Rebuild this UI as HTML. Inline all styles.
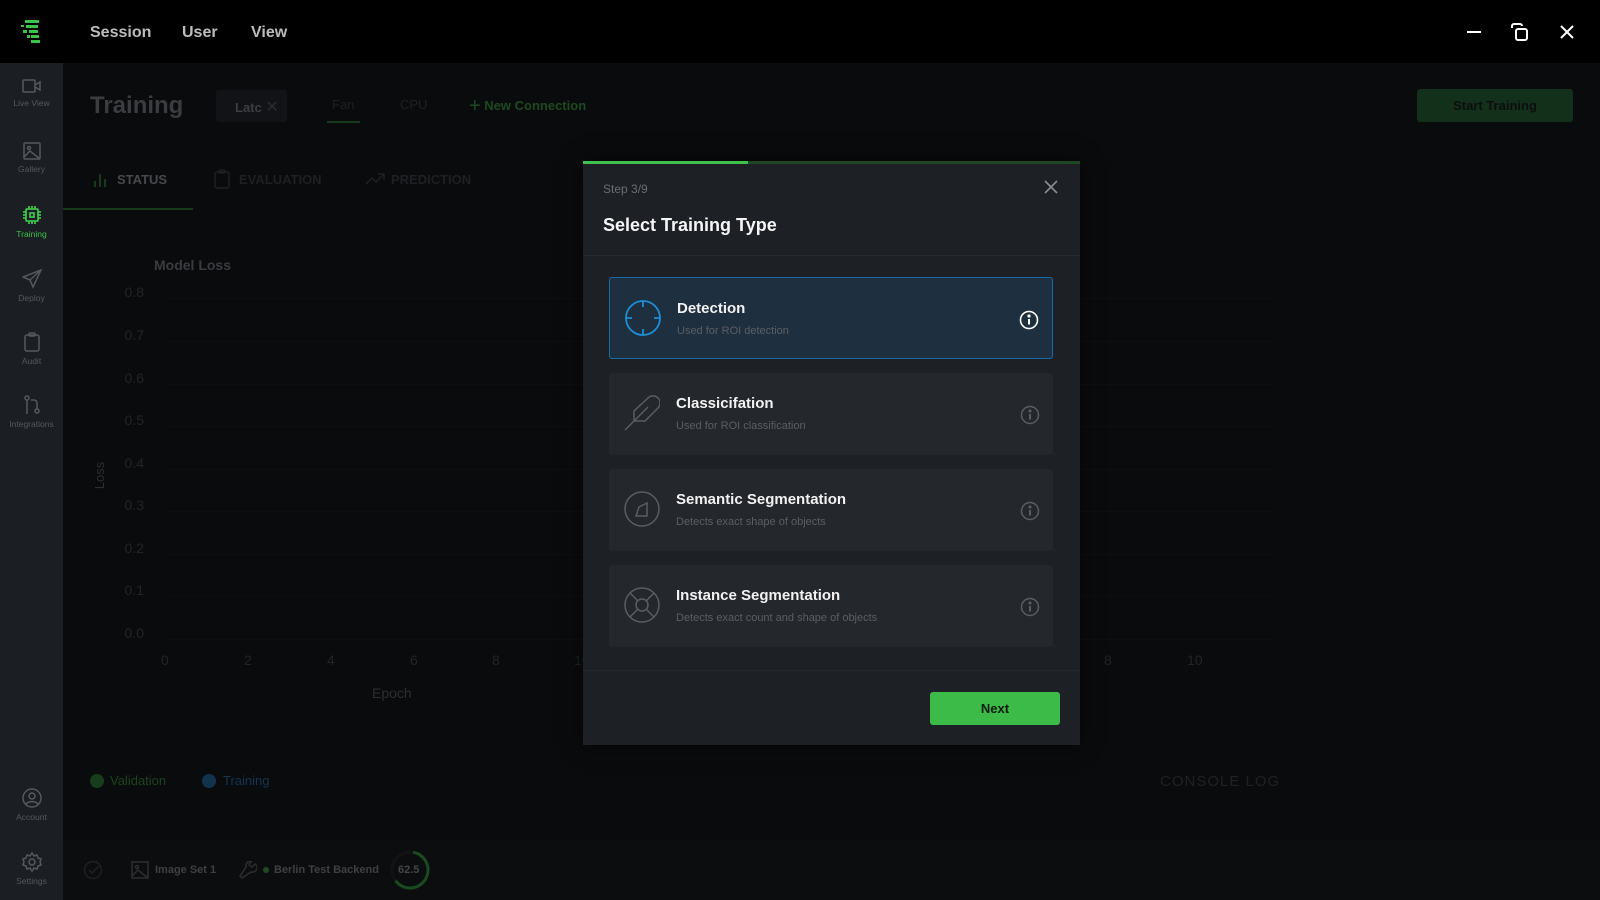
<!DOCTYPE html>
<html><head><meta charset="utf-8"><style>
*{margin:0;padding:0;box-sizing:border-box}
body{width:1600px;height:900px;overflow:hidden;background:#0a0b0d;font-family:"Liberation Sans",sans-serif;position:relative}
.abs{position:absolute}
.top{left:0;top:0;width:1600px;height:63px;background:#000}
.menu{top:24px;font-size:16px;font-weight:bold;color:#bdbdbd}
.side{left:0;top:63px;width:63px;height:837px;background:#1b1e22}
.si{position:absolute;left:0;width:63px;text-align:center;font-size:8.5px;color:#55585d}
.si svg{display:block;margin:0 auto 4px}
.dim{color:#1e2023}
.ylab{position:absolute;left:120px;width:24px;text-align:right;font-size:14px;color:#222427}
.xlab{position:absolute;top:652px;font-size:14px;color:#222427}
.grid{position:absolute;left:165px;width:1110px;height:1px;background:#0e0f12}
.modal{left:583px;top:161px;width:497px;height:584px;background:#1d2025;box-shadow:0 0 20px rgba(0,0,0,.6)}
.card{position:absolute;left:26px;width:444px;height:82px;background:#24272c;border-radius:3px}
.card.sel{background:#1e2f3f;border:1px solid #1a6aa8}
.card .t{position:absolute;left:67px;top:22px;font-size:15px;font-weight:bold;color:#f2f2f2}
.card .d{position:absolute;left:67px;top:47px;font-size:11px;color:#5b5e63}
.card .ic{position:absolute;left:15px;top:22px}
.card .inf{position:absolute;right:13px;top:32px}
</style></head><body>
<div class="abs top"></div>
<svg class="abs" style="left:18px;top:19px" width="26" height="26" viewBox="0 0 26 26">
<g fill="#3cc14a"><rect x="7" y="1" width="14" height="3"/><rect x="3" y="6" width="3" height="2"/><rect x="8" y="6" width="12" height="3"/><rect x="5" y="11" width="4" height="3"/><rect x="11" y="11" width="9" height="3"/><rect x="9" y="16" width="3" height="3"/><rect x="13" y="16" width="8" height="3"/><rect x="13" y="21" width="9" height="3"/></g></svg>
<div class="abs menu" style="left:90px">Session</div>
<div class="abs menu" style="left:182px">User</div>
<div class="abs menu" style="left:251px">View</div>
<svg class="abs" style="left:1465px;top:22px" width="130" height="20" viewBox="0 0 130 20" fill="none" stroke="#fff" stroke-width="2">
<path d="M2 10h14"/><path d="M47 6V4a2 2 0 0 1 2-2h6a2 2 0 0 1 2 2"/><rect x="51" y="7" width="11" height="11" rx="2"/><path d="M96 4l12 12M108 4l-12 12"/></svg>

<div class="abs side"></div>
<div class="si" style="top:78px"><svg width="20" height="16" viewBox="0 0 20 16" fill="none" stroke="#55585d" stroke-width="1.5"><rect x="1" y="2" width="12" height="12" rx="1"/><path d="M13 7l5-3v8l-5-3"/></svg>Live View</div>
<div class="si" style="top:142px"><svg width="18" height="18" viewBox="0 0 18 18" fill="none" stroke="#55585d" stroke-width="1.5"><rect x="1" y="1" width="16" height="16" rx="1"/><circle cx="6" cy="6" r="1.5"/><path d="M1 15l6-6 10 8"/></svg>Gallery</div>
<div class="si" style="top:205px;color:#3cc14a"><svg width="20" height="20" viewBox="0 0 20 20" fill="none" stroke="#3cc14a" stroke-width="1.8"><rect x="4" y="4" width="12" height="12" rx="1"/><rect x="8" y="8" width="4" height="4"/><path d="M7 1v3M10 1v3M13 1v3M7 16v3M10 16v3M13 16v3M1 7h3M1 10h3M1 13h3M16 7h3M16 10h3M16 13h3"/></svg>Training</div>
<div class="si" style="top:269px"><svg width="20" height="20" viewBox="0 0 20 20" fill="none" stroke="#55585d" stroke-width="1.5"><path d="M19 1L1 8l7 3 3 7z"/><path d="M19 1L8 11"/></svg>Deploy</div>
<div class="si" style="top:332px"><svg width="16" height="20" viewBox="0 0 16 20" fill="none" stroke="#55585d" stroke-width="1.5"><rect x="1" y="3" width="14" height="16" rx="2"/><rect x="5" y="1" width="6" height="3" rx="1"/></svg>Audit</div>
<div class="si" style="top:395px"><svg width="18" height="20" viewBox="0 0 18 20" fill="none" stroke="#55585d" stroke-width="1.5"><circle cx="4" cy="3" r="2"/><circle cx="14" cy="16" r="2"/><path d="M4 5v14M14 14V8a3 3 0 0 0-3-3H8"/></svg>Integrations</div>
<div class="si" style="top:788px"><svg width="20" height="20" viewBox="0 0 20 20" fill="none" stroke="#55585d" stroke-width="1.5"><circle cx="10" cy="10" r="9"/><circle cx="10" cy="8" r="3"/><path d="M4 16a7 5 0 0 1 12 0"/></svg>Account</div>
<div class="si" style="top:852px"><svg width="20" height="20" viewBox="0 0 20 20" fill="none" stroke="#55585d" stroke-width="1.5"><circle cx="10" cy="10" r="3"/><path d="M10 1l2 3 3-1 1 3 3 1-1 3 1 3-3 1-1 3-3-1-2 3-2-3-3 1-1-3-3-1 1-3-1-3 3-1 1-3 3 1z"/></svg>Settings</div>

<div class="abs" style="left:90px;top:92px;font-size:24px;font-weight:bold;color:#3a3c40">Training</div>
<div class="abs" style="left:216px;top:90px;width:71px;height:32px;background:#121316;border-radius:3px;font-size:13px;font-weight:bold;color:#3c3e42;padding:7px 0 0 19px">Latc <span style="color:#2a2c30;font-weight:normal;font-size:16px">✕</span></div>
<div class="abs dim" style="left:332px;top:97px;font-size:13px">Fan</div>
<div class="abs" style="left:327px;top:121px;width:33px;height:2px;background:#183a1c"></div>
<div class="abs dim" style="left:400px;top:97px;font-size:13px">CPU</div>
<div class="abs" style="left:469px;top:95px;font-size:13px;font-weight:bold;color:#1d4a22"><span style="font-size:20px;font-weight:normal;vertical-align:-2px">+</span> New Connection</div>
<div class="abs" style="left:1417px;top:89px;width:156px;height:33px;background:#12301a;border-radius:3px;font-size:13px;font-weight:bold;color:#0c0f0d;text-align:center;line-height:33px">Start Training</div>

<svg class="abs" style="left:93px;top:171px" width="14" height="16"><path d="M2 16V10M7 16V3M12 16V8" stroke="#1d4a22" stroke-width="1.5"/></svg>
<div class="abs" style="left:117px;top:172px;font-size:13px;font-weight:bold;color:#48494d">STATUS</div>
<div class="abs" style="left:63px;top:208px;width:130px;height:2px;background:#183a1c"></div>
<svg class="abs" style="left:214px;top:169px" width="16" height="20" fill="none" stroke="#1e2023" stroke-width="1.5"><rect x="1" y="3" width="14" height="16" rx="2"/><rect x="5" y="1" width="6" height="3" rx="1"/></svg>
<div class="abs" style="left:239px;top:172px;font-size:13px;font-weight:bold;color:#1e2023">EVALUATION</div>
<svg class="abs" style="left:365px;top:171px" width="20" height="14" fill="none" stroke="#1e2023" stroke-width="1.5"><path d="M1 13l6-6 4 4 8-8M13 3h6v6"/></svg>
<div class="abs" style="left:391px;top:172px;font-size:13px;font-weight:bold;color:#1e2023">PREDICTION</div>

<div class="abs" style="left:154px;top:257px;font-size:14px;font-weight:bold;color:#3a3c40">Model Loss</div>
<div class="grid" style="top:298px"></div><div class="grid" style="top:341px"></div><div class="grid" style="top:384px"></div><div class="grid" style="top:426px"></div><div class="grid" style="top:469px"></div><div class="grid" style="top:511px"></div><div class="grid" style="top:554px"></div><div class="grid" style="top:596px"></div><div class="grid" style="top:639px"></div>
<div class="ylab" style="top:284px">0.8</div><div class="ylab" style="top:327px">0.7</div><div class="ylab" style="top:370px">0.6</div><div class="ylab" style="top:412px">0.5</div><div class="ylab" style="top:455px">0.4</div><div class="ylab" style="top:497px">0.3</div><div class="ylab" style="top:540px">0.2</div><div class="ylab" style="top:582px">0.1</div><div class="ylab" style="top:625px">0.0</div>
<div class="xlab" style="left:161px">0</div><div class="xlab" style="left:244px">2</div><div class="xlab" style="left:327px">4</div><div class="xlab" style="left:410px">6</div><div class="xlab" style="left:492px">8</div><div class="xlab" style="left:574px">10</div><div class="xlab" style="left:1104px">8</div><div class="xlab" style="left:1187px">10</div>
<div class="abs" style="left:372px;top:685px;font-size:14px;color:#2c2e32">Epoch</div>
<div class="abs" style="left:86px;top:468px;font-size:13px;color:#2c2e32;transform:rotate(-90deg)">Loss</div>

<div class="abs" style="left:90px;top:774px;width:14px;height:14px;border-radius:50%;background:#173d1b"></div>
<div class="abs" style="left:110px;top:773px;font-size:13px;color:#1b4420">Validation</div>
<div class="abs" style="left:202px;top:774px;width:14px;height:14px;border-radius:50%;background:#13334d"></div>
<div class="abs" style="left:223px;top:773px;font-size:13px;color:#163550">Training</div>
<div class="abs" style="left:1160px;top:773px;font-size:15px;letter-spacing:1px;color:#1f2124">CONSOLE LOG</div>

<div class="abs" style="left:63px;top:840px;width:1537px;height:60px;background:#0c0d0f"></div>
<svg class="abs" style="left:83px;top:860px" width="20" height="20" fill="none" stroke="#1e2023" stroke-width="1.5"><circle cx="10" cy="10" r="8.5"/><path d="M6 10l3 3 7-7"/></svg>
<svg class="abs" style="left:131px;top:861px" width="18" height="18" fill="none" stroke="#2c2e32" stroke-width="1.5"><rect x="1" y="1" width="16" height="16"/><circle cx="6" cy="6" r="1.5"/><path d="M1 15l6-6 10 8"/></svg>
<div class="abs" style="left:155px;top:864px;font-size:11px;font-weight:bold;color:#3e4044">Image Set 1</div>
<svg class="abs" style="left:239px;top:861px" width="18" height="18" fill="none" stroke="#2c2e32" stroke-width="1.5"><path d="M16 3l-3 3-2-1-1-2 3-3a5 5 0 0 0-6 6L1 15l2 2 9-6a5 5 0 0 0 6-6z"/></svg>
<div class="abs" style="left:263px;top:867px;width:6px;height:6px;border-radius:50%;background:#1d4a22"></div>
<div class="abs" style="left:274px;top:864px;font-size:11px;font-weight:bold;color:#3e4044">Berlin Test Backend</div>
<svg class="abs" style="left:390px;top:850px" width="40" height="40" fill="none" stroke-width="3"><circle cx="20" cy="20" r="18" stroke="#121316"/><circle cx="20" cy="20" r="18" stroke="#1a4a20" stroke-dasharray="70 113" transform="rotate(-80 20 20)"/></svg>
<div class="abs" style="left:398px;top:864px;font-size:11px;font-weight:bold;color:#44464a">62.5</div>

<div class="abs modal">
<div class="abs" style="left:0;top:0;width:497px;height:3px;background:#1e4624"></div>
<div class="abs" style="left:0;top:0;width:165px;height:3px;background:#3cc14a"></div>
<div class="abs" style="left:20px;top:21px;font-size:12px;color:#6a6d72">Step 3/9</div>
<svg class="abs" style="left:461px;top:19px" width="14" height="14" stroke="#8a8d92" stroke-width="1.6"><path d="M1 1l12 12M13 1L1 13"/></svg>
<div class="abs" style="left:20px;top:54px;font-size:18px;font-weight:bold;color:#f5f5f5">Select Training Type</div>
<div class="abs" style="left:0;top:94px;width:497px;height:1px;background:#262a2f"></div>

<div class="card sel" style="top:116px">
<svg class="ic" width="36" height="36" fill="none" stroke="#1d8fd8" stroke-width="1.8"><circle cx="18" cy="18" r="17"/><path d="M18 1v6M18 29v6M1 18h6M29 18h6"/></svg>
<div class="t">Detection</div><div class="d">Used for ROI detection</div>
<svg class="inf" width="20" height="20" fill="none" stroke="#fff" stroke-width="1.6"><circle cx="10" cy="10" r="8.5"/><path d="M10 9v5.5" stroke-width="2"/><circle cx="10" cy="6" r=".8" fill="#fff"/></svg>
</div>
<div class="card" style="top:212px">
<svg class="ic" width="36" height="36" fill="none" stroke="#5a5d62" stroke-width="1.5"><path d="M1 35L10 26M10 26V16L24 3a7 7 0 0 1 10 10L21 26z M10 26L24 12"/></svg>
<div class="t">Classicifation</div><div class="d">Used for ROI classification</div>
<svg class="inf" width="20" height="20" fill="none" stroke="#5a5d62" stroke-width="1.5"><circle cx="10" cy="10" r="8.5"/><path d="M10 9v5.5" stroke-width="2"/><circle cx="10" cy="6" r=".8" fill="#5a5d62"/></svg>
</div>
<div class="card" style="top:308px">
<svg class="ic" width="36" height="36" fill="none" stroke="#5a5d62" stroke-width="1.5"><circle cx="18" cy="18" r="17"/><path d="M12 25l3-9 8-4v13z"/></svg>
<div class="t">Semantic Segmentation</div><div class="d">Detects exact shape of objects</div>
<svg class="inf" width="20" height="20" fill="none" stroke="#5a5d62" stroke-width="1.5"><circle cx="10" cy="10" r="8.5"/><path d="M10 9v5.5" stroke-width="2"/><circle cx="10" cy="6" r=".8" fill="#5a5d62"/></svg>
</div>
<div class="card" style="top:404px">
<svg class="ic" width="36" height="36" fill="none" stroke="#5a5d62" stroke-width="1.5"><circle cx="18" cy="18" r="17"/><circle cx="18" cy="18" r="6"/><path d="M6 6l8 8M30 6l-8 8M6 30l8-8M30 30l-8-8"/></svg>
<div class="t">Instance Segmentation</div><div class="d">Detects exact count and shape of objects</div>
<svg class="inf" width="20" height="20" fill="none" stroke="#5a5d62" stroke-width="1.5"><circle cx="10" cy="10" r="8.5"/><path d="M10 9v5.5" stroke-width="2"/><circle cx="10" cy="6" r=".8" fill="#5a5d62"/></svg>
</div>

<div class="abs" style="left:0;top:509px;width:497px;height:1px;background:#262a2f"></div>
<div class="abs" style="left:347px;top:531px;width:130px;height:33px;background:#3cbb48;border-radius:3px;text-align:center;line-height:33px;font-size:13px;font-weight:bold;color:#0d1a0e">Next</div>
</div>
</body></html>
